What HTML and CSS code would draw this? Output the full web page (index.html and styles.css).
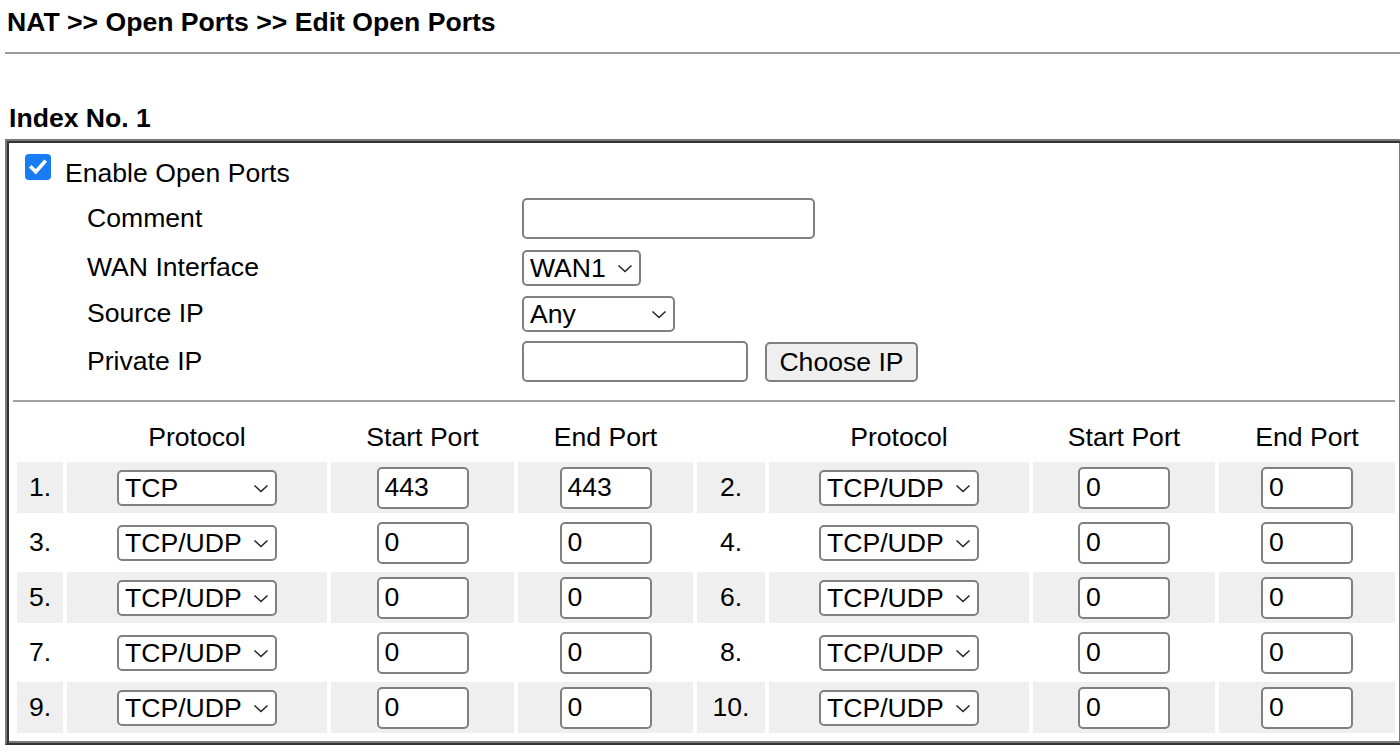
FILE: index.html
```html
<!DOCTYPE html>
<html lang="en">
<head>
<meta charset="utf-8">
<title>NAT &gt;&gt; Open Ports &gt;&gt; Edit Open Ports</title>
<link rel="stylesheet" href="styles.css">
</head>
<body>
<h1 class="page-title">NAT &gt;&gt; Open Ports &gt;&gt; Edit Open Ports</h1>
<hr class="title-rule">
<h2 class="index-title">Index No. 1</h2>
<div class="panel">
  <div class="check-row">
    <span class="checkbox"><svg width="26" height="26" viewBox="0 0 26 26"><path d="M6.5 13.5 L10.8 17.8 L19.5 8" fill="none" stroke="#fff" stroke-width="3.6" stroke-linecap="square" stroke-linejoin="miter"/></svg></span>
    <span class="check-label">Enable Open Ports</span>
  </div>
  <div class="field-row r-comment">
    <span class="field-label">Comment</span>
    <div class="field"><input class="text-input w-comment" type="text"></div>
  </div>
  <div class="field-row r-wan">
    <span class="field-label">WAN Interface</span>
    <div class="field"><span class="select-wrap"><select class="select w-wan"><option>WAN1</option></select><svg class="chev" width="16" height="9" viewBox="0 0 16 9"><path d="M1.5 1.5 L8 7.5 L14.5 1.5" fill="none" stroke="#222" stroke-width="1.5"/></svg></span></div>
  </div>
  <div class="field-row r-source">
    <span class="field-label">Source IP</span>
    <div class="field"><span class="select-wrap"><select class="select w-any"><option>Any</option></select><svg class="chev" width="16" height="9" viewBox="0 0 16 9"><path d="M1.5 1.5 L8 7.5 L14.5 1.5" fill="none" stroke="#222" stroke-width="1.5"/></svg></span></div>
  </div>
  <div class="field-row r-private">
    <span class="field-label">Private IP</span>
    <div class="field"><input class="text-input w-private" type="text"><button class="btn" type="button">Choose IP</button></div>
  </div>
  <div class="divider"></div>
  <table class="ports">
    <colgroup>
      <col class="c-num1"><col class="c-proto"><col class="c-start1"><col class="c-end1">
      <col class="c-num2"><col class="c-proto"><col class="c-start2"><col class="c-end2">
    </colgroup>
    <tr class="head-row">
      <th></th><th>Protocol</th><th>Start Port</th><th>End Port</th>
      <th></th><th>Protocol</th><th>Start Port</th><th>End Port</th>
    </tr>
    <tr class="row shade">
      <td>1.</td>
      <td><span class="select-wrap"><select class="select w-proto"><option>TCP</option></select><svg class="chev" width="16" height="9" viewBox="0 0 16 9"><path d="M1.5 1.5 L8 7.5 L14.5 1.5" fill="none" stroke="#222" stroke-width="1.5"/></svg></span></td>
      <td><input class="port-input" type="text" value="443"></td>
      <td><input class="port-input" type="text" value="443"></td>
      <td>2.</td>
      <td><span class="select-wrap"><select class="select w-proto"><option>TCP/UDP</option></select><svg class="chev" width="16" height="9" viewBox="0 0 16 9"><path d="M1.5 1.5 L8 7.5 L14.5 1.5" fill="none" stroke="#222" stroke-width="1.5"/></svg></span></td>
      <td><input class="port-input" type="text" value="0"></td>
      <td><input class="port-input" type="text" value="0"></td>
    </tr>
    <tr class="row">
      <td>3.</td>
      <td><span class="select-wrap"><select class="select w-proto"><option>TCP/UDP</option></select><svg class="chev" width="16" height="9" viewBox="0 0 16 9"><path d="M1.5 1.5 L8 7.5 L14.5 1.5" fill="none" stroke="#222" stroke-width="1.5"/></svg></span></td>
      <td><input class="port-input" type="text" value="0"></td>
      <td><input class="port-input" type="text" value="0"></td>
      <td>4.</td>
      <td><span class="select-wrap"><select class="select w-proto"><option>TCP/UDP</option></select><svg class="chev" width="16" height="9" viewBox="0 0 16 9"><path d="M1.5 1.5 L8 7.5 L14.5 1.5" fill="none" stroke="#222" stroke-width="1.5"/></svg></span></td>
      <td><input class="port-input" type="text" value="0"></td>
      <td><input class="port-input" type="text" value="0"></td>
    </tr>
    <tr class="row shade">
      <td>5.</td>
      <td><span class="select-wrap"><select class="select w-proto"><option>TCP/UDP</option></select><svg class="chev" width="16" height="9" viewBox="0 0 16 9"><path d="M1.5 1.5 L8 7.5 L14.5 1.5" fill="none" stroke="#222" stroke-width="1.5"/></svg></span></td>
      <td><input class="port-input" type="text" value="0"></td>
      <td><input class="port-input" type="text" value="0"></td>
      <td>6.</td>
      <td><span class="select-wrap"><select class="select w-proto"><option>TCP/UDP</option></select><svg class="chev" width="16" height="9" viewBox="0 0 16 9"><path d="M1.5 1.5 L8 7.5 L14.5 1.5" fill="none" stroke="#222" stroke-width="1.5"/></svg></span></td>
      <td><input class="port-input" type="text" value="0"></td>
      <td><input class="port-input" type="text" value="0"></td>
    </tr>
    <tr class="row">
      <td>7.</td>
      <td><span class="select-wrap"><select class="select w-proto"><option>TCP/UDP</option></select><svg class="chev" width="16" height="9" viewBox="0 0 16 9"><path d="M1.5 1.5 L8 7.5 L14.5 1.5" fill="none" stroke="#222" stroke-width="1.5"/></svg></span></td>
      <td><input class="port-input" type="text" value="0"></td>
      <td><input class="port-input" type="text" value="0"></td>
      <td>8.</td>
      <td><span class="select-wrap"><select class="select w-proto"><option>TCP/UDP</option></select><svg class="chev" width="16" height="9" viewBox="0 0 16 9"><path d="M1.5 1.5 L8 7.5 L14.5 1.5" fill="none" stroke="#222" stroke-width="1.5"/></svg></span></td>
      <td><input class="port-input" type="text" value="0"></td>
      <td><input class="port-input" type="text" value="0"></td>
    </tr>
    <tr class="row shade">
      <td>9.</td>
      <td><span class="select-wrap"><select class="select w-proto"><option>TCP/UDP</option></select><svg class="chev" width="16" height="9" viewBox="0 0 16 9"><path d="M1.5 1.5 L8 7.5 L14.5 1.5" fill="none" stroke="#222" stroke-width="1.5"/></svg></span></td>
      <td><input class="port-input" type="text" value="0"></td>
      <td><input class="port-input" type="text" value="0"></td>
      <td>10.</td>
      <td><span class="select-wrap"><select class="select w-proto"><option>TCP/UDP</option></select><svg class="chev" width="16" height="9" viewBox="0 0 16 9"><path d="M1.5 1.5 L8 7.5 L14.5 1.5" fill="none" stroke="#222" stroke-width="1.5"/></svg></span></td>
      <td><input class="port-input" type="text" value="0"></td>
      <td><input class="port-input" type="text" value="0"></td>
    </tr>
  </table>
</div>
</body>
</html>
```

FILE: styles.css
```css
html {
  overflow: hidden;
}
body {
  margin: 0;
  padding: 0 0 0 5px;
  font-family: "Liberation Sans", Arial, Helvetica, sans-serif;
  font-size: 26.6px;
  color: #000;
  background: #fff;
}
.page-title {
  margin: 0;
  padding: 8px 0 0 2px;
  font-size: 26.6px;
  line-height: 29px;
  font-weight: bold;
}
.title-rule {
  margin: 15px 0 0 0;
  border: 0;
  height: 2px;
  background: #9a9a9a;
}
.index-title {
  margin: 50px 0 0 0;
  padding-left: 4px;
  font-size: 26.6px;
  line-height: 29px;
  font-weight: bold;
}
.panel {
  margin-top: 6px;
  width: 1398px;
  box-sizing: border-box;
  border: 2px solid;
  border-color: #7a7a7a #333 #333 #7a7a7a;
  box-shadow: inset 2px 2px 0 #333, inset -2px -2px 0 #7a7a7a;
  padding: 9px 6px 6px 6px;
}
.check-row {
  display: flex;
  align-items: center;
  height: 45px;
  padding-left: 12px;
  gap: 14px;
}
.checkbox {
  width: 26px;
  height: 26px;
  border-radius: 4px;
  background: #1a7cf5;
  margin-bottom: 11px;
  display: flex;
}
.check-label {
  line-height: 30px;
}
.field-row {
  display: grid;
  grid-template-columns: 435px auto;
  align-items: center;
  height: 45px;
  padding-left: 74px;
}
.r-comment { margin-top: 1px; }
.r-wan { margin-top: 4px; }
.r-source { margin-top: 1px; }
.r-private { margin-top: 3px; }
.field {
  display: flex;
  align-items: center;
}
.text-input, .port-input, .select, .btn {
  font-family: inherit;
  font-size: 26.6px;
  color: #000;
  box-sizing: border-box;
  border: 2px solid #808080;
  background: #fff;
  margin: 0;
}
.text-input {
  height: 41px;
  border-radius: 5px;
  padding: 0 6px;
}
.w-comment { width: 293px; }
.w-private { width: 226px; }
.btn {
  margin-left: 17px;
  width: 153px;
  height: 40px;
  border-radius: 5px;
  background: #efefef;
  padding: 0;
  line-height: 36px;
}
.select-wrap {
  position: relative;
  display: inline-block;
  line-height: 0;
}
.select {
  appearance: none;
  -webkit-appearance: none;
  height: 36px;
  border-radius: 5px;
  padding: 0 0 0 6px;
  line-height: 32px;
}
.chev {
  position: absolute;
  right: 8px;
  top: 50%;
  margin-top: -4px;
  pointer-events: none;
}
.w-wan { width: 119px; }
.w-any { width: 153px; }
.w-proto { width: 160px; }
.divider {
  margin: 16px 0 0 0;
  height: 2px;
  background: #a0a0a0;
}
.ports {
  margin-top: 11px;
  width: 1386px;
  table-layout: fixed;
  border-collapse: separate;
  border-spacing: 4px;
}
.c-num1 { width: 46px; }
.c-proto { width: 260px; }
.c-start1 { width: 183px; }
.c-end1 { width: 175px; }
.c-num2 { width: 68px; }
.c-start2 { width: 182px; }
.c-end2 { width: 176px; }
.ports th, .ports td {
  padding: 0;
  text-align: center;
  vertical-align: middle;
  font-weight: normal;
}
.head-row {
  height: 41px;
}
.row {
  height: 51px;
}
.shade td {
  background: #efefef;
}
.port-input {
  width: 92px;
  height: 42px;
  border-radius: 5px;
  padding: 0 6px;
  vertical-align: middle;
}
```
